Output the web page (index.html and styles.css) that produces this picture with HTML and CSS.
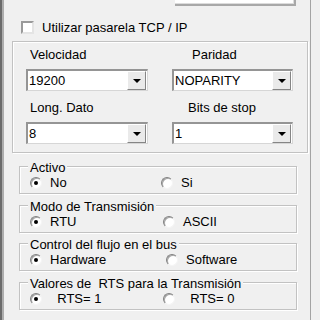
FILE: index.html
```html
<!DOCTYPE html>
<html lang="es">
<head>
    <meta charset="UTF-8">
    <title>Configuración del puerto</title>
    <link rel="stylesheet" href="styles.css">
</head>
<body>
<div class="window">
    <div class="top-field"></div>

    <div class="check-row">
        <span class="check"></span>
        <span>Utilizar pasarela TCP / IP</span>
    </div>

    <!-- parametros del puerto serie -->
    <div class="panel">
        <div class="field">
            <div class="lbl">Velocidad</div>
            <div class="combo"><span class="value">19200</span><span class="drop"><i></i></span></div>
        </div>
        <div class="field">
            <div class="lbl lbl-par">Paridad</div>
            <div class="combo"><span class="value">NOPARITY</span><span class="drop"><i></i></span></div>
        </div>
        <div class="field">
            <div class="lbl">Long. Dato</div>
            <div class="combo"><span class="value">8</span><span class="drop"><i></i></span></div>
        </div>
        <div class="field">
            <div class="lbl lbl-stop">Bits de stop</div>
            <div class="combo"><span class="value">1</span><span class="drop"><i></i></span></div>
        </div>
    </div>

    <div class="group group-first">
        <span class="legend">Activo</span>
        <div class="options">
            <div class="opt"><span class="radio checked"></span><span>No</span></div>
            <div class="opt opt-si"><span class="radio"></span><span>Si</span></div>
        </div>
    </div>

    <div class="group">
        <span class="legend">Modo de Transmisión</span>
        <div class="options">
            <div class="opt"><span class="radio checked"></span><span>RTU</span></div>
            <div class="opt"><span class="radio"></span><span>ASCII</span></div>
        </div>
    </div>

    <div class="group group-flow">
        <span class="legend">Control del flujo en el bus</span>
        <div class="options">
            <div class="opt"><span class="radio checked"></span><span>Hardware</span></div>
            <div class="opt opt-soft"><span class="radio"></span><span>Software</span></div>
        </div>
    </div>

    <div class="group">
        <span class="legend">Valores de&nbsp; RTS para la Transmisión</span>
        <div class="options">
            <div class="opt"><span class="radio checked"></span><span class="pre">  RTS= 1</span></div>
            <div class="opt"><span class="radio"></span><span class="pre">  RTS= 0</span></div>
        </div>
    </div>
</div>
</body>
</html>
```

FILE: styles.css
```css
/* ventana de configuracion, estilo clasico de Windows */
body {
    margin: 0;
    background-color: #f0f0f0;
    font-family: "Liberation Sans", Arial, sans-serif;
    font-size: 13px;
    color: #000;
}

.window {
    width: 308px;
    height: 320px;
    overflow: hidden;
    border-left: 2px solid #6b6b6b;
    border-right: 1px solid #a4a4a4;
    box-shadow: inset 2px 0 #adadad;
    background: #f0f0f0;
}

.top-field {
    margin-left: 173px;
    width: 119px;
    height: 4px;
    background: #fff;
    border-right: 2px solid #a8a8a8;
    border-bottom: 2px solid #a8a8a8;
    box-shadow: inset -1px -1px #dcdcdc;
}

.check-row {
    display: flex;
    align-items: center;
    gap: 8px;
    height: 13px;
    margin: 15px 0 0 19px;
}

.check {
    width: 13px;
    height: 13px;
    box-sizing: border-box;
    background: #fff;
    border: 2px solid;
    border-color: #9a9a9a #e4e4e4 #e4e4e4 #9a9a9a;
}

/* panel de velocidad / paridad */
.panel {
    display: grid;
    grid-template-columns: 122px 121px;
    column-gap: 24px;
    row-gap: 9px;
    width: 296px;
    height: 112px;
    box-sizing: border-box;
    margin: 7px 0 0 10px;
    padding: 5px 0 8px 13px;
    border: 1px solid #c2c2c2;
    box-shadow: inset 1px 1px #fff, 1px 1px #fff;
}

.lbl {
    height: 16px;
    line-height: 16px;
    margin-bottom: 6px;
    padding-left: 4px;
}

.lbl-par {
    padding-left: 20px;
}

.lbl-stop {
    padding-left: 16px;
}

.combo {
    display: flex;
    align-items: stretch;
    height: 22px;
    box-sizing: border-box;
    background: #fff;
    border-style: solid;
    border-width: 2px 1px 1px 2px;
    border-color: #959595 #d6d6d6 #d6d6d6 #959595;
}

.combo .value {
    flex: 1;
    padding-left: 1px;
    line-height: 19px;
}

.drop {
    display: flex;
    align-items: center;
    justify-content: center;
    width: 17px;
    margin: 0 1px 0 0;
    background: #eaeaea;
    border: 1px solid;
    border-color: #fff #858585 #858585 #fff;
}

.drop i {
    width: 0;
    height: 0;
    border-left: 4px solid transparent;
    border-right: 4px solid transparent;
    border-top: 4px solid #000;
}

/* grupos de opciones */
.group {
    width: 278px;
    box-sizing: border-box;
    margin: 11px 0 0 17px;
    padding: 0 0 2px 0;
    border: 1px solid #c2c2c2;
    box-shadow: inset 1px 1px #fff, 1px 1px #fff;
}

.group-first {
    margin-top: 13px;
}

.group-flow {
    margin-top: 10px;
}

.legend {
    display: block;
    width: max-content;
    margin: -7px 0 -1px 8px;
    padding: 0 2px;
    line-height: 16px;
    background: #f0f0f0;
}

.options {
    display: grid;
    grid-template-columns: 133px auto;
    padding-left: 10px;
    height: 16px;
    line-height: 16px;
}

.opt {
    display: flex;
    align-items: center;
    gap: 8px;
}

.opt-si {
    margin-left: -2px;
}

.opt-soft {
    margin-left: 3px;
}

.pre {
    white-space: pre;
}

.radio {
    position: relative;
    width: 12px;
    height: 12px;
    box-sizing: border-box;
    border-radius: 50%;
    background: #fff;
    border: 1px solid;
    border-color: #808080 #f4f4f4 #f4f4f4 #808080;
    box-shadow: inset 1px 1px 0 #a6a6a6;
}

.radio.checked::after {
    content: "";
    position: absolute;
    left: 3px;
    top: 3px;
    width: 4px;
    height: 4px;
    border-radius: 50%;
    background: #000;
}
```
